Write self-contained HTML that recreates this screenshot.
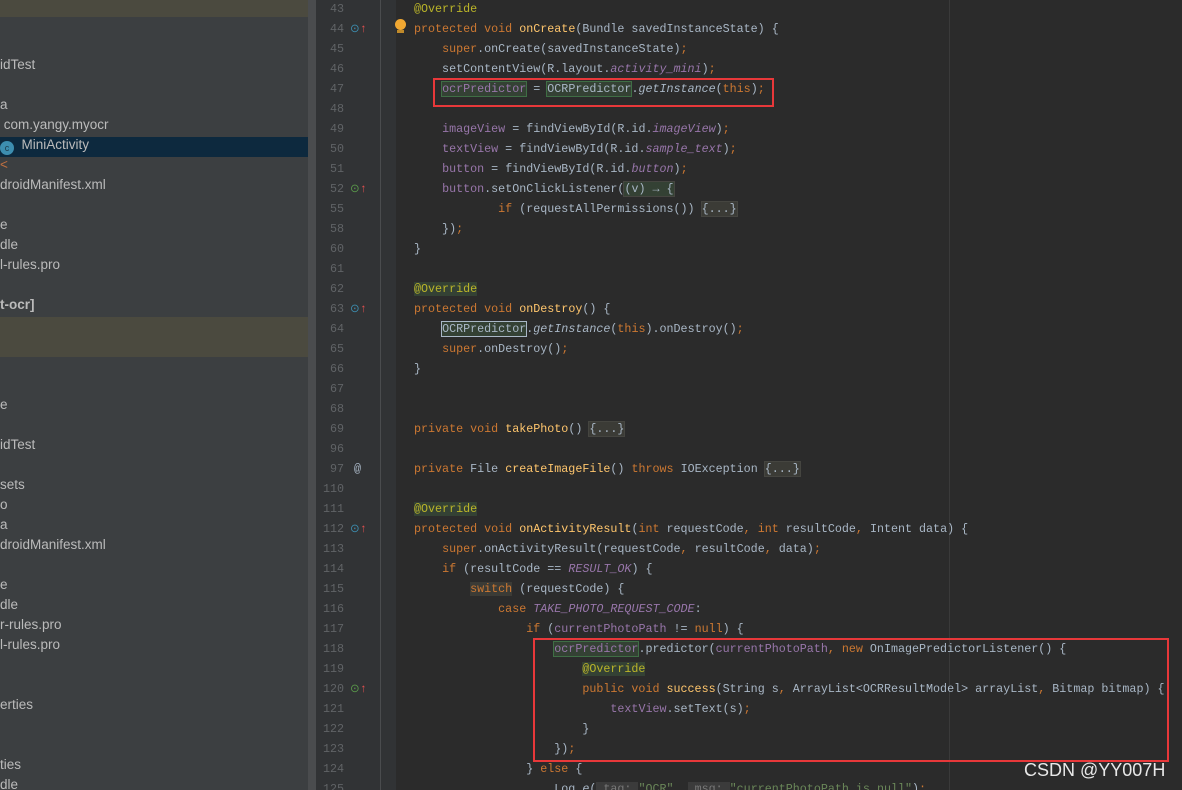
<!DOCTYPE html><html style="overflow:hidden"><head><meta charset="utf-8"><style>
html,body{overflow:hidden}
body{margin:0;width:1182px;height:790px;background:#2b2b2b;position:relative;font-family:"Liberation Mono",monospace}
#left{position:absolute;left:0;top:0;width:308px;height:790px;background:#3c3f41}
#sb{position:absolute;left:308px;top:0;width:8px;height:790px;background:#4a4c4e}
.lt{position:absolute;left:0;height:20px;line-height:20px;font:13.5px "Liberation Sans",sans-serif;color:#bbbbbb;white-space:pre}
#gut{position:absolute;left:316px;top:0;width:80px;height:790px;background:#313335}
.r{position:absolute;left:0;width:1182px;height:20px;line-height:20px;font-size:11.7px;white-space:pre;color:#a9b7c6}
.n{position:absolute;left:316px;width:28px;text-align:right;color:#606366}
.c{position:absolute;left:414px}
.k{color:#cc7832}.m{color:#ffc66d}.f{color:#9876aa}.fi{color:#9876aa;font-style:italic}.a{color:#bbb529}.s{color:#6a8759}.i{font-style:italic}
.hl{background:#344134;outline:1px solid #3f6e45}
.fold{background:#3b3b36;color:#a9b7c6;outline:1px solid #454540}
.box{position:absolute;border:2px solid #e8383a}
</style></head><body>
<div id="left">
<div style="position:absolute;left:0;top:0;width:308px;height:17px;background:#4b4a3f"></div>
<div style="position:absolute;left:0;top:137px;width:308px;height:20px;background:#0d293e"></div>
<div style="position:absolute;left:0;top:317px;width:308px;height:40px;background:#4b4a3f"></div>
<div class="lt" style="top:57px">idTest</div>
<div class="lt" style="top:97px">a</div>
<div class="lt" style="top:117px"> com.yangy.myocr</div>
<div class="lt" style="top:137px"><span style="display:inline-block;width:14px;height:14px;border-radius:50%;background:#3d8eb0;color:#1c3a4a;font-size:9px;text-align:center;line-height:14px;vertical-align:-2px">c</span>  MiniActivity</div>
<div class="lt" style="top:157px;color:#c07040">&lt;</div>
<div class="lt" style="top:177px">droidManifest.xml</div>
<div class="lt" style="top:217px">e</div>
<div class="lt" style="top:237px">dle</div>
<div class="lt" style="top:257px">l-rules.pro</div>
<div class="lt" style="top:297px;font-weight:bold">t-ocr]</div>
<div class="lt" style="top:397px">e</div>
<div class="lt" style="top:437px">idTest</div>
<div class="lt" style="top:477px">sets</div>
<div class="lt" style="top:497px">o</div>
<div class="lt" style="top:517px">a</div>
<div class="lt" style="top:537px">droidManifest.xml</div>
<div class="lt" style="top:577px">e</div>
<div class="lt" style="top:597px">dle</div>
<div class="lt" style="top:617px">r-rules.pro</div>
<div class="lt" style="top:637px">l-rules.pro</div>
<div class="lt" style="top:697px">erties</div>
<div class="lt" style="top:757px">ties</div>
<div class="lt" style="top:777px">dle</div>
</div>
<div id="sb"></div>
<div id="gut"><div style="position:absolute;left:64px;top:0;width:1px;height:790px;background:#4a4c4e"></div></div>
<div style="position:absolute;left:949px;top:0;width:1px;height:790px;background:#3a3a3a"></div>
<div style="position:absolute;left:395px;top:19px;width:11px;height:11px;border-radius:50%;background:#f0a732"></div>
<div style="position:absolute;left:397px;top:30px;width:7px;height:3px;background:#c08a2a"></div>

<div class="r" style="top:-1px"><span class="n">43</span><span class="c"><span class="a">@Override</span></span></div>
<div class="r" style="top:19px"><span class="n">44</span><span style="position:absolute;left:350px;color:#3d8eb0">⊙<span style="color:#e05050">↑</span></span><span class="c"><span class="k">protected void </span><span class="m">onCreate</span>(Bundle savedInstanceState) {</span></div>
<div class="r" style="top:39px"><span class="n">45</span><span class="c">    <span class="k">super</span>.onCreate(savedInstanceState)<span class="k">;</span></span></div>
<div class="r" style="top:59px"><span class="n">46</span><span class="c">    setContentView(R.layout.<span class="fi">activity_mini</span>)<span class="k">;</span></span></div>
<div class="r" style="top:79px"><span class="n">47</span><span class="c">    <span class="f hl">ocrPredictor</span> = <span class="hl">OCRPredictor</span>.<span class="i">getInstance</span>(<span class="k">this</span>)<span class="k">;</span></span></div>
<div class="r" style="top:99px"><span class="n">48</span></div>
<div class="r" style="top:119px"><span class="n">49</span><span class="c">    <span class="f">imageView</span> = findViewById(R.id.<span class="fi">imageView</span>)<span class="k">;</span></span></div>
<div class="r" style="top:139px"><span class="n">50</span><span class="c">    <span class="f">textView</span> = findViewById(R.id.<span class="fi">sample_text</span>)<span class="k">;</span></span></div>
<div class="r" style="top:159px"><span class="n">51</span><span class="c">    <span class="f">button</span> = findViewById(R.id.<span class="fi">button</span>)<span class="k">;</span></span></div>
<div class="r" style="top:179px"><span class="n">52</span><span style="position:absolute;left:350px;color:#5a9a4a">⊙<span style="color:#e05050">↑</span></span><span class="c">    <span class="f">button</span>.setOnClickListener(<span class="fold" style="background:#344134">(v) → {</span></span></div>
<div class="r" style="top:199px"><span class="n">55</span><span class="c">            <span class="k">if </span>(requestAllPermissions()) <span class="fold">{...}</span></span></div>
<div class="r" style="top:219px"><span class="n">58</span><span class="c">    })<span class="k">;</span></span></div>
<div class="r" style="top:239px"><span class="n">60</span><span class="c">}</span></div>
<div class="r" style="top:259px"><span class="n">61</span></div>
<div class="r" style="top:279px"><span class="n">62</span><span class="c"><span class="a" style="background:#344134">@Override</span></span></div>
<div class="r" style="top:299px"><span class="n">63</span><span style="position:absolute;left:350px;color:#3d8eb0">⊙<span style="color:#e05050">↑</span></span><span class="c"><span class="k">protected void </span><span class="m">onDestroy</span>() {</span></div>
<div class="r" style="top:319px"><span class="n">64</span><span class="c">    <span class="hl" style="outline-color:#a9b7c6">OCRPredictor</span>.<span class="i">getInstance</span>(<span class="k">this</span>).onDestroy()<span class="k">;</span></span></div>
<div class="r" style="top:339px"><span class="n">65</span><span class="c">    <span class="k">super</span>.onDestroy()<span class="k">;</span></span></div>
<div class="r" style="top:359px"><span class="n">66</span><span class="c">}</span></div>
<div class="r" style="top:379px"><span class="n">67</span></div>
<div class="r" style="top:399px"><span class="n">68</span></div>
<div class="r" style="top:419px"><span class="n">69</span><span class="c"><span class="k">private void </span><span class="m">takePhoto</span>() <span class="fold">{...}</span></span></div>
<div class="r" style="top:439px"><span class="n">96</span></div>
<div class="r" style="top:459px"><span class="n">97</span><span style="position:absolute;left:354px;color:#a9b7c6">@</span><span class="c"><span class="k">private </span>File <span class="m">createImageFile</span>() <span class="k">throws </span>IOException <span class="fold">{...}</span></span></div>
<div class="r" style="top:479px"><span class="n">110</span></div>
<div class="r" style="top:499px"><span class="n">111</span><span class="c"><span class="a" style="background:#344134">@Override</span></span></div>
<div class="r" style="top:519px"><span class="n">112</span><span style="position:absolute;left:350px;color:#3d8eb0">⊙<span style="color:#e05050">↑</span></span><span class="c"><span class="k">protected void </span><span class="m">onActivityResult</span>(<span class="k">int </span>requestCode<span class="k">, int </span>resultCode<span class="k">, </span>Intent data) {</span></div>
<div class="r" style="top:539px"><span class="n">113</span><span class="c">    <span class="k">super</span>.onActivityResult(requestCode<span class="k">, </span>resultCode<span class="k">, </span>data)<span class="k">;</span></span></div>
<div class="r" style="top:559px"><span class="n">114</span><span class="c">    <span class="k">if </span>(resultCode == <span class="fi">RESULT_OK</span>) {</span></div>
<div class="r" style="top:579px"><span class="n">115</span><span class="c">        <span class="k" style="background:#3b3b36">switch</span> (requestCode) {</span></div>
<div class="r" style="top:599px"><span class="n">116</span><span class="c">            <span class="k">case </span><span class="fi">TAKE_PHOTO_REQUEST_CODE</span>:</span></div>
<div class="r" style="top:619px"><span class="n">117</span><span class="c">                <span class="k">if </span>(<span class="f">currentPhotoPath</span> != <span class="k">null</span>) {</span></div>
<div class="r" style="top:639px"><span class="n">118</span><span class="c">                    <span class="f hl">ocrPredictor</span>.predictor(<span class="f">currentPhotoPath</span><span class="k">, new </span>OnImagePredictorListener() {</span></div>
<div class="r" style="top:659px"><span class="n">119</span><span class="c">                        <span class="a" style="background:#344134">@Override</span></span></div>
<div class="r" style="top:679px"><span class="n">120</span><span style="position:absolute;left:350px;color:#5a9a4a">⊙<span style="color:#e05050">↑</span></span><span class="c">                        <span class="k">public void </span><span class="m">success</span>(String s<span class="k">, </span>ArrayList&lt;OCRResultModel&gt; arrayList<span class="k">, </span>Bitmap bitmap) {</span></div>
<div class="r" style="top:699px"><span class="n">121</span><span class="c">                            <span class="f">textView</span>.setText(s)<span class="k">;</span></span></div>
<div class="r" style="top:719px"><span class="n">122</span><span class="c">                        }</span></div>
<div class="r" style="top:739px"><span class="n">123</span><span class="c">                    })<span class="k">;</span></span></div>
<div class="r" style="top:759px"><span class="n">124</span><span class="c">                } <span class="k">else </span>{</span></div>
<div class="r" style="top:779px"><span class="n">125</span><span class="c">                    Log.<span class="i">e</span>(<span style="color:#787878;background:#3b3b3b"> tag: </span><span class="s">"OCR"</span><span class="k">, </span><span style="color:#787878;background:#3b3b3b"> msg: </span><span class="s">"currentPhotoPath is null"</span>)<span class="k">;</span></span></div>

<div class="box" style="left:433px;top:78px;width:337px;height:25px"></div>
<div class="box" style="left:533px;top:638px;width:632px;height:120px"></div>
<div style="position:absolute;left:1024px;top:760px;font:18px 'Liberation Sans',sans-serif;color:#e8e8e8">CSDN @YY007H</div>
</body></html>
